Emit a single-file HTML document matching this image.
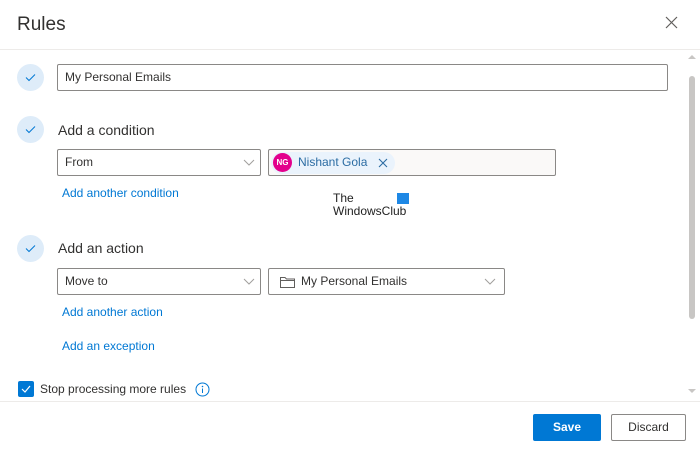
<!DOCTYPE html>
<html><head><style>
*{margin:0;padding:0;box-sizing:border-box}
body{width:700px;height:451px;background:#fff;font-family:"Liberation Sans",sans-serif;position:relative;overflow:hidden;color:#323130}
.a{position:absolute}
.circ{position:absolute;width:27px;height:27px;border-radius:50%;background:#deecf9}
.circ svg{position:absolute;left:8px;top:9px}
.box{position:absolute;border:1px solid #8a8886;border-radius:2px;background:#fff;font-size:12px;color:#323130;padding-left:7px;line-height:25px}
.link{position:absolute;color:#0078d4;font-size:12px}
.h{position:absolute;font-size:14px;color:#323130}
.chev{position:absolute;top:9px}
</style></head><body>
<div class="a" style="left:17px;top:14px;font-size:19px;color:#323130">Rules</div>
<svg class="a" style="left:665px;top:16px" width="13" height="13"><path d="M1 1L12 12M12 1L1 12" stroke="#605e5c" stroke-width="1.2"/></svg>
<div class="a" style="left:0;top:49px;width:700px;height:1px;background:#edebe9"></div>

<div class="circ" style="left:17px;top:64px"><svg width="11" height="9"><path d="M1 4.5L4 7.5L10 1.5" stroke="#0078d4" fill="none" stroke-width="1"/></svg></div>
<div class="box" style="left:57px;top:64px;width:611px;height:27px">My Personal Emails</div>

<div class="circ" style="left:17px;top:116px"><svg width="11" height="9"><path d="M1 4.5L4 7.5L10 1.5" stroke="#0078d4" fill="none" stroke-width="1"/></svg></div>
<div class="h" style="left:58px;top:122px">Add a condition</div>
<div class="box" style="left:57px;top:149px;width:204px;height:27px">From<svg class="chev" style="left:185px" width="12" height="7"><path d="M1 1L6 6L11 1" stroke="#a19f9d" fill="none"/></svg></div>
<div class="box" style="left:268px;top:149px;width:288px;height:27px;background:#faf9f8;padding-left:2px">
 <div class="a" style="left:2px;top:2px;width:124px;height:22px;border-radius:11px;background:#eaf3fc"></div>
 <div class="a" style="left:4px;top:3px;width:19px;height:19px;border-radius:50%;background:#e3008c;color:#fff;font-size:8px;font-weight:bold;text-align:center;line-height:19px">NG</div>
 <div class="a" style="left:29px;top:0;color:#2b6ca3;font-size:12px">Nishant Gola</div>
 <svg class="a" style="left:109px;top:8px" width="10" height="10"><path d="M1 1L9 9M9 1L1 9" stroke="#2b6ca3" stroke-width="1.1"/></svg>
</div>
<div class="link" style="left:62px;top:186px">Add another condition</div>

<div class="a" style="left:333px;top:192px;font-size:12px;color:#222;line-height:13px">The<br>WindowsClub</div>
<div class="a" style="left:397px;top:193px;width:12px;height:11px;background:#1e88e5"></div>

<div class="circ" style="left:17px;top:235px"><svg width="11" height="9"><path d="M1 4.5L4 7.5L10 1.5" stroke="#0078d4" fill="none" stroke-width="1"/></svg></div>
<div class="h" style="left:58px;top:240px">Add an action</div>
<div class="box" style="left:57px;top:268px;width:204px;height:27px">Move to<svg class="chev" style="left:185px" width="12" height="7"><path d="M1 1L6 6L11 1" stroke="#a19f9d" fill="none"/></svg></div>
<div class="box" style="left:268px;top:268px;width:237px;height:27px;padding-left:32px">My Personal Emails
 <svg class="a" style="left:11px;top:7px" width="15" height="12"><path d="M0.5 1.5H5L6.5 3H14.5V11.5H0.5Z M0.5 4.5H14.5" stroke="#605e5c" fill="none"/></svg>
 <svg class="chev" style="left:215px" width="12" height="7"><path d="M1 1L6 6L11 1" stroke="#a19f9d" fill="none"/></svg></div>
<div class="link" style="left:62px;top:305px">Add another action</div>
<div class="link" style="left:62px;top:339px">Add an exception</div>

<div class="a" style="left:18px;top:381px;width:16px;height:16px;background:#0078d4;border-radius:2px"><svg style="position:absolute;left:3px;top:4px" width="10" height="8"><path d="M1 4L4 7L9 1" stroke="#fff" fill="none" stroke-width="1.2"/></svg></div>
<div class="a" style="left:40px;top:382px;font-size:12px;color:#323130">Stop processing more rules</div>
<svg class="a" style="left:195px;top:382px" width="15" height="15"><circle cx="7.5" cy="7.5" r="6.5" stroke="#0078d4" fill="none"/><path d="M7.5 6.5V11" stroke="#0078d4"/><circle cx="7.5" cy="4.5" r="0.8" fill="#0078d4"/></svg>

<svg class="a" style="left:688px;top:54px" width="8" height="6"><path d="M0 5L4 1L8 5Z" fill="#c8c6c4"/></svg>
<div class="a" style="left:689px;top:76px;width:6px;height:243px;background:#c8c6c4;border-radius:3px"></div>
<svg class="a" style="left:688px;top:388px" width="8" height="6"><path d="M0 1L4 5L8 1Z" fill="#c8c6c4"/></svg>

<div class="a" style="left:0;top:401px;width:700px;height:1px;background:#edebe9"></div>
<div class="a" style="left:533px;top:414px;width:68px;height:27px;background:#0078d4;border-radius:2px;color:#fff;font-size:12px;font-weight:bold;text-align:center;line-height:27px">Save</div>
<div class="a" style="left:611px;top:414px;width:75px;height:27px;border:1px solid #8a8886;border-radius:2px;color:#323130;font-size:12px;text-align:center;line-height:25px">Discard</div>
</body></html>
